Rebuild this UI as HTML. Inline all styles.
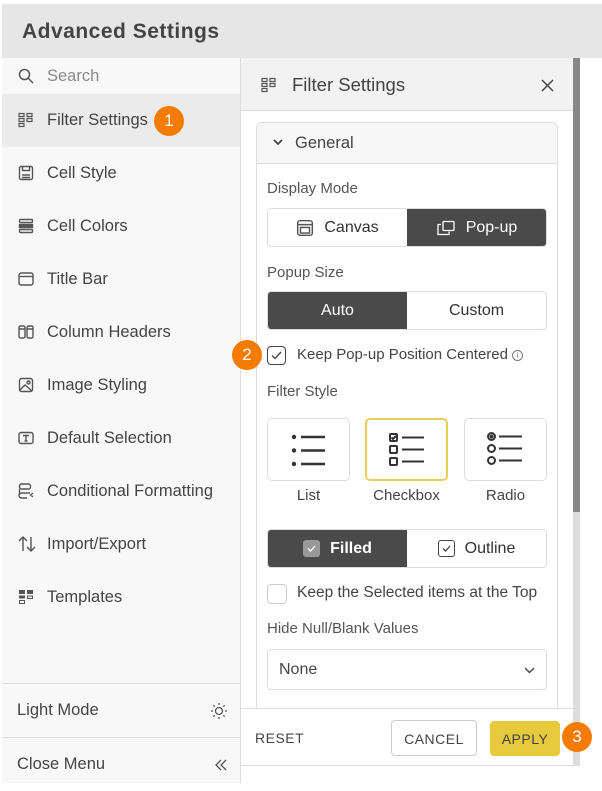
<!DOCTYPE html>
<html><head><meta charset="utf-8"><style>
*{box-sizing:border-box;margin:0;padding:0}
body{width:602px;height:783px;background:#fff;font-family:"Liberation Sans",sans-serif;color:#333;position:relative;overflow:hidden}
.abs{position:absolute}
.hdr{left:2px;top:4px;width:600px;height:54px;background:#e6e6e6;font-size:21px;font-weight:bold;color:#444;padding:16px 0 0 20px;letter-spacing:.5px}
.side{left:2px;top:58px;width:239px;height:725px;background:#f8f8f8;border-right:1px solid #ddd}
.item{position:absolute;left:0;width:238px;height:53px;font-size:16.5px;color:#444;padding-left:45px;line-height:53px;white-space:nowrap}
.item svg{position:absolute;left:16px;top:18px}
.badge{position:absolute;width:30px;height:30px;border-radius:50%;background:#f57c00;color:#fff;font-size:17px;text-align:center;line-height:30px}
.panel{left:241px;top:58px;width:332px;height:708px;background:#fff}
.ph{position:absolute;left:0;top:0;width:332px;height:53px;background:#f2f2f2;border-bottom:1px solid #ddd;font-size:18.5px;color:#444;line-height:53px;padding-left:51px}
.card{position:absolute;left:15px;top:64px;width:302px;height:600px;border:1px solid #ddd;border-radius:6px;overflow:hidden}
.lbl{position:absolute;left:26px;font-size:15px;color:#555;white-space:nowrap}
.seg{position:absolute;left:26px;width:280px;height:39px;border:1px solid #ddd;border-radius:4px;display:flex;overflow:hidden;font-size:16px}
.seg div{flex:1;display:flex;align-items:center;justify-content:center;gap:10px}
.dk{background:#4a4a4a;color:#fff}
.tile{position:absolute;top:360px;width:83px;height:63px;border:1px solid #ddd;border-radius:5px}
.tl{position:absolute;top:429px;width:83px;text-align:center;font-size:15px;color:#444}
.btn{position:absolute;height:36px;border-radius:4px;font-size:14px;text-align:center;line-height:36px;letter-spacing:.5px;color:#444}
</style></head><body>
<div class="abs hdr">Advanced Settings</div>
<div class="abs side">
 <div class="item" style="top:-8px;color:#888"><svg width="16" height="16" viewBox="0 0 16 16" fill="none" stroke="#555" stroke-width="1.5"><circle cx="6.5" cy="6.5" r="5"/><path d="M10 10l5 5"/></svg>Search</div>
 <div class="item" style="top:36px;background:#ebebeb"><svg width="16" height="16" viewBox="0 0 16 16" fill="none" stroke="#555" stroke-width="1.2"><rect x="1" y="1.5" width="5" height="3"/><rect x="9" y="1.5" width="5" height="3"/><rect x="1" y="6.5" width="5" height="3"/><rect x="9" y="6.5" width="5" height="3"/><rect x="1" y="11.5" width="5" height="3"/></svg>Filter Settings<span class="badge" style="left:152px;top:12px">1</span></div>
 <div class="item" style="top:89px"><svg width="16" height="16" viewBox="0 0 16 16" fill="none" stroke="#555" stroke-width="1.4"><rect x="1.5" y="1.5" width="13" height="13" rx="1.5"/><path d="M4.5 1.5v4h7v-4M4 10h8M4 12.5h8"/></svg>Cell Style</div>
 <div class="item" style="top:142px"><svg width="16" height="16" viewBox="0 0 16 16" fill="none" stroke="#555" stroke-width="1.4"><rect x="1.5" y="1.5" width="13" height="3" rx="1"/><rect x="1.5" y="6.5" width="13" height="3" fill="#555"/><rect x="1.5" y="11.5" width="13" height="3" rx="1"/></svg>Cell Colors</div>
 <div class="item" style="top:195px"><svg width="16" height="16" viewBox="0 0 16 16" fill="none" stroke="#555" stroke-width="1.4"><rect x="1" y="2" width="14" height="12" rx="2"/><path d="M1 5.5h14"/></svg>Title Bar</div>
 <div class="item" style="top:248px"><svg width="16" height="16" viewBox="0 0 16 16" fill="none" stroke="#555" stroke-width="1.4"><rect x="1" y="2" width="6" height="12" rx="1.5"/><rect x="9" y="2" width="6" height="12" rx="1.5"/><path d="M1 5h6M9 5h6"/></svg>Column Headers</div>
 <div class="item" style="top:301px"><svg width="16" height="16" viewBox="0 0 16 16" fill="none" stroke="#555" stroke-width="1.4"><rect x="1.5" y="1.5" width="13" height="13" rx="2"/><path d="M2 13l5-5 7 6"/><circle cx="10.5" cy="5.5" r="1.5"/></svg>Image Styling</div>
 <div class="item" style="top:354px"><svg width="16" height="16" viewBox="0 0 16 16" fill="none" stroke="#555" stroke-width="1.4"><rect x="1" y="2.5" width="14" height="11" rx="2"/><path d="M5 5.5h6M8 5.5v5.5M6.5 11h3"/></svg>Default Selection</div>
 <div class="item" style="top:407px"><svg width="16" height="16" viewBox="0 0 16 16" fill="none" stroke="#555" stroke-width="1.4"><rect x="1.5" y="1" width="11" height="5" rx="2"/><path d="M12 10H3.5a2 2 0 0 0 0 5H9M15 10l-2.5 2 2.5 2"/><path d="M1.5 6v6"/></svg>Conditional Formatting</div>
 <div class="item" style="top:460px"><svg width="18" height="16" viewBox="0 0 18 16" fill="none" stroke="#555" stroke-width="1.4"><path d="M5 15V1M1 5l4-4 4 4M13 1v14M9 11l4 4 4-4"/></svg>Import/Export</div>
 <div class="item" style="top:513px"><svg width="16" height="16" viewBox="0 0 16 16" fill="#555"><rect x="1" y="1" width="6" height="4"/><rect x="9" y="1" width="6" height="4"/><rect x="1" y="6.5" width="6" height="3"/><rect x="9.5" y="7" width="5" height="2.5" fill="none" stroke="#555" stroke-width="1"/><rect x="1.5" y="11.5" width="5" height="3" fill="none" stroke="#555" stroke-width="1"/></svg>Templates</div>
 <div class="abs" style="left:0;top:625px;width:238px;border-top:1px solid #ddd"></div>
 <div class="item" style="top:626px;padding-left:15px">Light Mode<svg style="left:208px;top:18px" width="18" height="18" viewBox="0 0 18 18" fill="none" stroke="#555" stroke-width="1.3"><circle cx="9" cy="9" r="3.5"/><path d="M9 1v2M9 15v2M1 9h2M15 9h2M3.3 3.3l1.4 1.4M13.3 13.3l1.4 1.4M3.3 14.7l1.4-1.4M13.3 4.7l1.4-1.4"/></svg></div>
 <div class="abs" style="left:0;top:679px;width:238px;border-top:1px solid #ddd"></div>
 <div class="item" style="top:680px;padding-left:15px">Close Menu<svg style="left:212px;top:20px" width="14" height="14" viewBox="0 0 14 14" fill="none" stroke="#555" stroke-width="1.3"><path d="M7 2L2 7l5 5M12 2L7 7l5 5"/></svg></div>
</div>
<div class="abs" style="left:573px;top:58px;width:7px;height:708px;background:#ddd"></div>
<div class="abs" style="left:573px;top:58px;width:7px;height:454px;background:#888"></div>
<div class="abs panel">
 <div class="ph"><svg style="position:absolute;left:20px;top:19px" width="16" height="16" viewBox="0 0 16 16" fill="none" stroke="#555" stroke-width="1.2"><rect x="1" y="1.5" width="5" height="3"/><rect x="9" y="1.5" width="5" height="3"/><rect x="1" y="6.5" width="5" height="3"/><rect x="9" y="6.5" width="5" height="3"/><rect x="1" y="11.5" width="5" height="3"/></svg>Filter Settings<svg style="position:absolute;left:300px;top:21px" width="13" height="13" viewBox="0 0 13 13" stroke="#444" stroke-width="1.5"><path d="M1 1l11 11M12 1L1 12"/></svg></div>
 <div class="card">
  <div style="height:41px;background:#f7f7f7;border-bottom:1px solid #ddd;font-size:16.5px;color:#444;line-height:40px;padding-left:38px;position:relative"><svg style="position:absolute;left:16px;top:16px" width="10" height="7" viewBox="0 0 10 7" fill="none" stroke="#444" stroke-width="1.8"><path d="M1 1l4 4 4-4"/></svg>General</div>
 </div>
 <div class="lbl" style="top:122px">Display Mode</div>
 <div class="seg" style="top:150px"><div><svg width="18" height="18" viewBox="0 0 16 16" fill="none" stroke="#555" stroke-width="1.3"><rect x="1.5" y="1.5" width="13" height="13" rx="2"/><path d="M1.5 5h13"/><rect x="4" y="7.5" width="8" height="5"/></svg>Canvas</div><div class="dk"><svg width="20" height="16" viewBox="0 0 20 16" fill="none" stroke="#fff" stroke-width="1.3"><rect x="7" y="1.5" width="11" height="9" rx="1"/><path d="M5 4.5H2v10h11v-3"/></svg>Pop-up</div></div>
 <div class="lbl" style="top:206px">Popup Size</div>
 <div class="seg" style="top:233px"><div class="dk">Auto</div><div>Custom</div></div>
 <div class="abs" style="left:26px;top:288px;width:19px;height:19px;border:1.3px solid #444;border-radius:4px"><svg style="position:absolute;left:3px;top:4px" width="11" height="9" viewBox="0 0 11 9" fill="none" stroke="#444" stroke-width="1.3"><path d="M1 4.5l3 3L10 1"/></svg></div>
 <span class="badge" style="left:-9px;top:282px">2</span>
 <div class="lbl" style="left:56px;top:288px;font-size:15px;color:#444">Keep Pop-up Position Centered <span style="display:inline-block;width:11px;height:11px;border:1px solid #777;border-radius:50%;font-size:8px;line-height:10px;text-align:center;vertical-align:1px;color:#777">i</span></div>
 <div class="lbl" style="top:325px">Filter Style</div>
 <div class="tile" style="left:26px"><svg style="position:absolute;left:22px;top:14px" width="38" height="34" viewBox="0 0 38 34" fill="#333" stroke="#333" stroke-width="2.5"><circle cx="4" cy="4" r="2.2" stroke="none"/><circle cx="4" cy="17.5" r="2.2" stroke="none"/><circle cx="4" cy="31" r="2.2" stroke="none"/><path d="M11 4h24M11 17.5h24M11 31h24"/></svg></div>
 <div class="tile" style="left:124px;border:2px solid #e6cf5a"><svg style="position:absolute;left:21px;top:13px" width="40" height="34" viewBox="0 0 40 34" fill="none" stroke="#333" stroke-width="2"><rect x="2" y="1" width="7" height="7" rx="1"/><rect x="2" y="13" width="7" height="7" rx="1"/><rect x="2" y="25" width="7" height="7" rx="1"/><path d="M3.5 4.5l1.5 1.5 3-3M14 4.5h22M14 16.5h22M14 28.5h22"/></svg></div>
 <div class="tile" style="left:223px"><svg style="position:absolute;left:21px;top:13px" width="40" height="34" viewBox="0 0 40 34" fill="none" stroke="#333" stroke-width="2"><circle cx="5.5" cy="4.5" r="3.5"/><circle cx="5.5" cy="4.5" r="1" fill="#333"/><circle cx="5.5" cy="16.5" r="3.5"/><circle cx="5.5" cy="28.5" r="3.5"/><path d="M13 4.5h23M13 16.5h23M13 28.5h23"/></svg></div>
 <div class="tl" style="left:26px">List</div>
 <div class="tl" style="left:124px">Checkbox</div>
 <div class="tl" style="left:223px">Radio</div>
 <div class="seg" style="top:471px"><div class="dk" style="font-weight:bold"><span style="display:inline-block;width:17px;height:17px;background:#999;border-radius:3px;position:relative"><svg style="position:absolute;left:4px;top:5px" width="9" height="7" viewBox="0 0 9 7" fill="none" stroke="#fff" stroke-width="1.3"><path d="M1 3.5l2.5 2.5L8 1"/></svg></span>Filled</div><div><span style="display:inline-block;width:17px;height:17px;border:1.3px solid #444;border-radius:3px;position:relative"><svg style="position:absolute;left:3px;top:4px" width="9" height="7" viewBox="0 0 9 7" fill="none" stroke="#444" stroke-width="1.3"><path d="M1 3.5l2.5 2.5L8 1"/></svg></span>Outline</div></div>
 <div class="abs" style="left:26px;top:526px;width:20px;height:20px;border:1px solid #ccc;border-radius:4px"></div>
 <div class="lbl" style="left:56px;top:526px;font-size:15.5px;color:#444">Keep the Selected items at the Top</div>
 <div class="lbl" style="top:562px">Hide Null/Blank Values</div>
 <div class="abs" style="left:26px;top:591px;width:280px;height:41px;border:1px solid #ddd;border-radius:4px;font-size:16px;line-height:39px;padding-left:11px;color:#444">None<svg style="position:absolute;right:11px;top:17px" width="11" height="7" viewBox="0 0 11 7" fill="none" stroke="#444" stroke-width="1.4"><path d="M1 1l4.5 4.5L10 1"/></svg></div>
 <div class="abs" style="left:0;top:650px;width:332px;height:58px;background:#fff;border-top:1px solid #ddd;border-bottom:1px solid #ddd">
  <div class="btn" style="left:14px;top:11px">RESET</div>
  <div class="btn" style="left:150px;top:11px;width:86px;border:1px solid #ccc">CANCEL</div>
  <div class="btn" style="left:249px;top:12px;width:70px;height:35px;background:#e6c93c;color:#444">APPLY</div>
 </div>
</div>
<span class="badge" style="left:562px;top:722px">3</span>
</body></html>
